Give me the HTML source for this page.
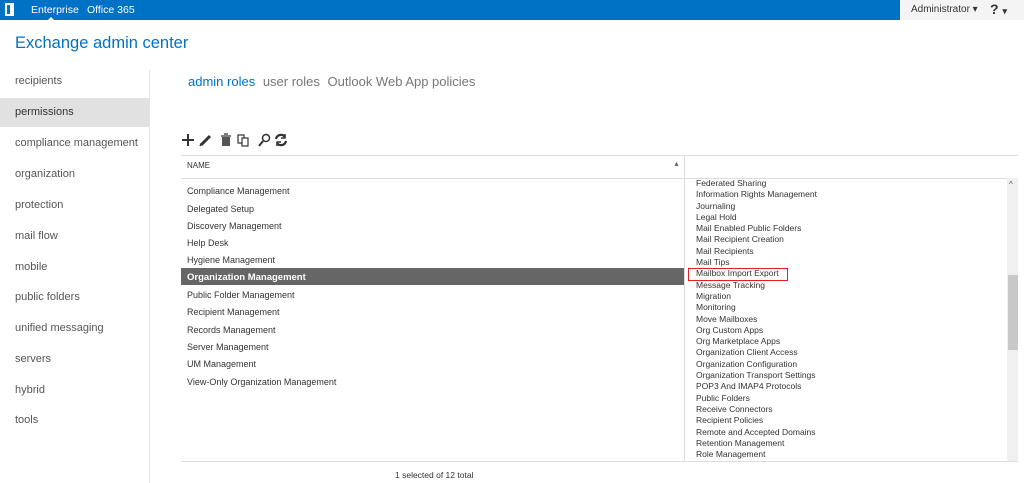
<!DOCTYPE html><html><head><style>
body{margin:0;width:1024px;height:483px;overflow:hidden;background:#fff;font-family:"Liberation Sans",sans-serif;position:relative}
.a{position:absolute;white-space:nowrap}
.nav{left:15px;font-size:11px;color:#555}
.r{left:187px;font-size:9px;color:#333}
</style></head><body>
<div class="a" style="left:0;top:0;width:900px;height:20px;background:#0072c6"></div>
<div class="a" style="left:5px;top:3px;width:9px;height:13px;border:2px solid #fff;border-right-width:4px;box-sizing:border-box"></div>
<div class="a" style="left:31px;top:4px;font-size:10.5px;color:#fff">Enterprise</div>
<div class="a" style="left:48px;top:17px;width:0;height:0;border:3px solid transparent;border-bottom-color:#fff;border-top:0"></div>
<div class="a" style="left:87px;top:4px;font-size:10.5px;color:#fff">Office 365</div>
<div class="a" style="left:900px;top:0;width:124px;height:20px;background:#f4f4f4"></div>
<div class="a" style="left:911px;top:4px;font-size:10px;color:#333">Administrator ▾</div>
<div class="a" style="left:990px;top:1px;font-size:14px;font-weight:bold;color:#333">? <span style="font-size:9px">▾</span></div>
<div class="a" style="left:15px;top:34px;font-size:16.5px;color:#0072c6">Exchange admin center</div>
<div class="a" style="left:149px;top:70px;width:1px;height:413px;background:#e4e4e4"></div>
<div class="a" style="left:0;top:98px;width:149px;height:29px;background:#e1e1e1"></div>
<div class="a nav" style="top:75px">recipients</div>
<div class="a nav" style="top:106px;color:#333">permissions</div>
<div class="a nav" style="top:137px">compliance management</div>
<div class="a nav" style="top:168px">organization</div>
<div class="a nav" style="top:199px">protection</div>
<div class="a nav" style="top:230px">mail flow</div>
<div class="a nav" style="top:261px">mobile</div>
<div class="a nav" style="top:291px">public folders</div>
<div class="a nav" style="top:322px">unified messaging</div>
<div class="a nav" style="top:353px">servers</div>
<div class="a nav" style="top:384px">hybrid</div>
<div class="a nav" style="top:414px">tools</div>
<div class="a" style="left:188px;top:74px;font-size:13px;color:#0072c6">admin roles <span style="color:#777;margin-left:4px">user roles</span> <span style="color:#777;margin-left:4px">Outlook Web App policies</span></div>
<svg class="a" style="left:181px;top:132px" width="110" height="16" viewBox="0 0 110 16" fill="none" stroke="#333" stroke-width="2">
<path d="M7 2v12M1 8h12"/>
<path d="M20 13l9-9" stroke-width="3"/><path d="M19 14l1-2" stroke-width="1.5"/>
<rect x="41" y="5" width="8" height="9" fill="#555" stroke="none"/><path d="M40 4h10M43 2h4" stroke-width="1.3"/>
<rect x="57" y="3" width="6" height="8" stroke-width="1.2"/><rect x="61" y="6" width="6" height="8" fill="#fff" stroke-width="1.2"/>
<circle cx="85" cy="6" r="3.5" stroke-width="1.5"/><path d="M82 9l-4 5"/>
<path d="M95 7a5 5 0 0 1 9-2M105 9a5 5 0 0 1-9 2" stroke-width="2.2"/><path d="M104 2v4h-4M96 14v-4h4" stroke-width="1.5"/>
</svg>
<div class="a" style="left:181px;top:155px;width:837px;height:22px;border-top:1px solid #ddd;border-bottom:1px solid #ddd"></div>
<div class="a" style="left:684px;top:155px;width:1px;height:306px;background:#ddd"></div>
<div class="a" style="left:187px;top:161px;font-size:8px;color:#333">NAME</div>
<div class="a" style="left:673px;top:161px;font-size:7px;color:#666">▲</div>
<div class="a r" style="top:186px">Compliance Management</div>
<div class="a r" style="top:204px">Delegated Setup</div>
<div class="a r" style="top:221px">Discovery Management</div>
<div class="a r" style="top:238px">Help Desk</div>
<div class="a r" style="top:255px">Hygiene Management</div>
<div class="a" style="left:181px;top:268px;width:503px;height:17px;background:#666"></div>
<div class="a r" style="top:272px;color:#fff;font-weight:bold;font-size:9.5px">Organization Management</div>
<div class="a r" style="top:290px">Public Folder Management</div>
<div class="a r" style="top:307px">Recipient Management</div>
<div class="a r" style="top:325px">Records Management</div>
<div class="a r" style="top:342px">Server Management</div>
<div class="a r" style="top:359px">UM Management</div>
<div class="a r" style="top:377px">View-Only Organization Management</div>
<div class="a" style="left:696px;top:178px;font-size:8.5px;color:#333;line-height:11.3px">Federated Sharing<br>Information Rights Management<br>Journaling<br>Legal Hold<br>Mail Enabled Public Folders<br>Mail Recipient Creation<br>Mail Recipients<br>Mail Tips<br>Mailbox Import Export<br>Message Tracking<br>Migration<br>Monitoring<br>Move Mailboxes<br>Org Custom Apps<br>Org Marketplace Apps<br>Organization Client Access<br>Organization Configuration<br>Organization Transport Settings<br>POP3 And IMAP4 Protocols<br>Public Folders<br>Receive Connectors<br>Recipient Policies<br>Remote and Accepted Domains<br>Retention Management<br>Role Management</div>
<div class="a" style="left:688px;top:268px;width:98px;height:11px;border:1px solid #e02020"></div>
<div class="a" style="left:1007px;top:178px;width:11px;height:283px;background:#f0f0f0"></div>
<div class="a" style="left:1009px;top:180px;font-size:8px;color:#555">^</div>
<div class="a" style="left:1008px;top:275px;width:10px;height:75px;background:#c8c8c8"></div>
<div class="a" style="left:181px;top:461px;width:837px;height:1px;background:#ddd"></div>
<div class="a" style="left:395px;top:470px;font-size:8.5px;color:#333">1 selected of 12 total</div>
</body></html>
